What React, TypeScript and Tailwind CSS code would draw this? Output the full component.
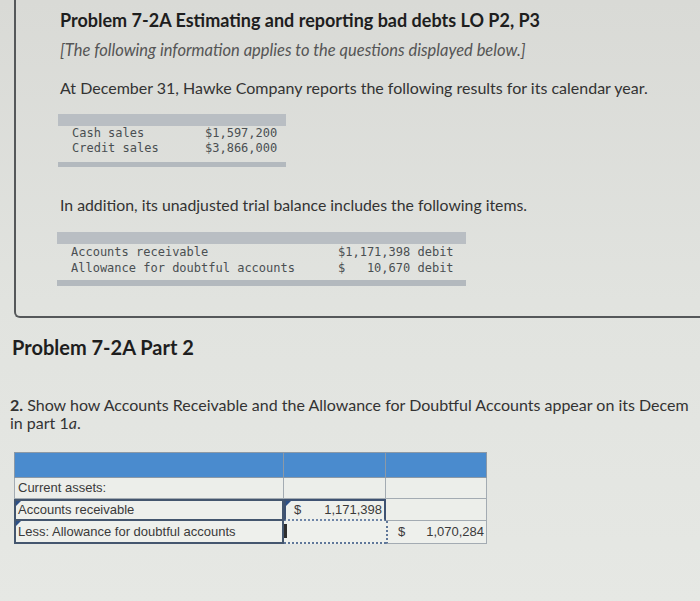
const heading = { fontFamily: 'Lato, "Open Sans", Arial, sans-serif' };
const mono = { fontFamily: '"DejaVu Sans Mono", "Liberation Mono", monospace' };
const arial = { fontFamily: '"Liberation Sans", Arial, sans-serif' };

function Marker() {
  // small blue corner flag shown on editable cells
  return (
    <span className="absolute left-0 top-0 h-0 w-0 border-t-[5px] border-r-[5px] border-t-[#2c4f86] border-r-transparent" />
  );
}

function InfoTable({
  width,
  valueOffset,
  rows,
  topBar,
  bottomBar,
  lineHeight,
  padBottom,
}: {
  width: string;
  valueOffset: string;
  rows: [string, string][];
  topBar: string;
  bottomBar: string;
  lineHeight: string;
  padBottom: string;
}) {
  return (
    <div className={width}>
      <div className={`${topBar} bg-[#b9bec3]`} />
      <div className={`pl-[14px] ${padBottom} text-[12px] text-[#4a4f52] ${lineHeight}`} style={mono}>
        {rows.map(([label, value]) => (
          <div key={label} className="flex">
            <span className={valueOffset}>{label}</span>
            <span className="whitespace-pre">{value}</span>
          </div>
        ))}
      </div>
      <div className={`${bottomBar} bg-[#b3b9be]`} />
    </div>
  );
}

export default function App() {
  return (
    <div className="min-h-screen w-[700px] overflow-hidden bg-gradient-to-b from-[#d9dad6] via-[#e1e3df] to-[#e6e8e4] text-[#222]">
      <div
        className="ml-[14px] h-[318px] rounded-bl-[6px] border-b-2 border-l-2 border-[#55585a] pl-[44px] pt-[10px]"
        style={heading}
      >
        <h1 className="text-[18px] font-bold leading-[20px] text-[#1e1e1e]">
          Problem 7-2A Estimating and reporting bad debts LO P2, P3
        </h1>
        <p className="mt-[10px] text-[16.5px] italic leading-[20px] text-[#555]">
          [The following information applies to the questions displayed below.]
        </p>
        <p className="mt-[18px] text-[16px] leading-[20px] text-[#333]">
          At December 31, Hawke Company reports the following results for its calendar year.
        </p>

        <div className="-ml-[2px] mt-[16px]">
          <InfoTable
            width="w-[228px]"
            valueOffset="w-[133px]"
            topBar="h-[12px]"
            bottomBar="h-[5px]"
            lineHeight="leading-[15px]"
            padBottom="pb-[6px]"
            rows={[
              ['Cash sales', '$1,597,200'],
              ['Credit sales', '$3,866,000'],
            ]}
          />
        </div>

        <p className="mt-[28px] text-[15.8px] leading-[20px] text-[#333]">
          In addition, its unadjusted trial balance includes the following items.
        </p>

        <div className="-ml-[3px] mt-[17px]">
          <InfoTable
            width="w-[409px]"
            valueOffset="w-[267px]"
            topBar="h-[12px]"
            bottomBar="h-[6px]"
            lineHeight="leading-[16px]"
            padBottom="pb-[4px]"
            rows={[
              ['Accounts receivable', '$1,171,398 debit'],
              ['Allowance for doubtful accounts', '$   10,670 debit'],
            ]}
          />
        </div>
      </div>

      <div style={heading}>
        <h2 className="mt-[17px] pl-[12px] text-[20px] font-bold leading-[24px] text-[#1e1e1e]">
          Problem 7-2A Part 2
        </h2>
        <p className="mt-[37px] w-[700px] pl-[10px] text-[16px] leading-[18px] text-[#333]">
          <b>2.</b> Show how Accounts Receivable and the Allowance for Doubtful Accounts appear on its Decem
          <br />
          in part 1<i>a</i>.
        </p>
      </div>

      <div
        className="ml-[14px] mt-[20px] grid w-[473px] grid-cols-[270px_102px_101px] text-[13px] text-[#3a3a3a]"
        style={arial}
      >
        <div className="h-[26px] border border-[#8c99a6] bg-[#4a8bce]" />
        <div className="h-[26px] border border-l-0 border-[#8c99a6] bg-[#4a8bce]" />
        <div className="h-[26px] border border-l-0 border-[#8c99a6] bg-[#4a8bce]" />

        <div className="flex h-[21px] items-center border border-t-0 border-[#a3abb2] bg-[#eceeea] pl-[3px]">
          Current assets:
        </div>
        <div className="h-[21px] border-b border-r border-[#a3abb2] bg-[#eceeea]" />
        <div className="h-[21px] border-b border-r border-[#a3abb2] bg-[#eceeea]" />

        <div className="relative flex h-[22px] items-center border-2 border-[#44566e] bg-[#eef0ec] pl-[2px]">
          <Marker />
          Accounts receivable
        </div>
        <div className="relative flex h-[22px] items-center justify-between border-2 border-[#3e5272] border-b-[#6f86a8] bg-[#eef0ec] pl-[8px] pr-[2px] [border-bottom-style:dotted]">
          <Marker />
          <span>$</span>
          <span>1,171,398</span>
        </div>
        <div className="h-[22px] border-b border-r border-[#a3abb2] bg-[#eceeea]" />

        <div className="relative flex h-[23px] items-center border-2 border-t-0 border-[#44566e] bg-[#eef0ec] pl-[2px]">
          <Marker />
          Less: Allowance for doubtful accounts
        </div>
        <div className="flex h-[23px] border-b-2 border-dotted border-[#5f7799] bg-[#eef0ec]">
          <span className="mt-[3px] h-[14px] w-[3px] bg-[#2e2e2e]" />
        </div>
        <div className="flex h-[23px] items-center justify-between border-b border-l-2 border-r border-l-[#5f7799] border-b-[#a3abb2] border-r-[#a3abb2] bg-[#eef0ec] pl-[10px] pr-[2px] [border-left-style:dotted]">
          <span>$</span>
          <span>1,070,284</span>
        </div>
      </div>
    </div>
  );
}
